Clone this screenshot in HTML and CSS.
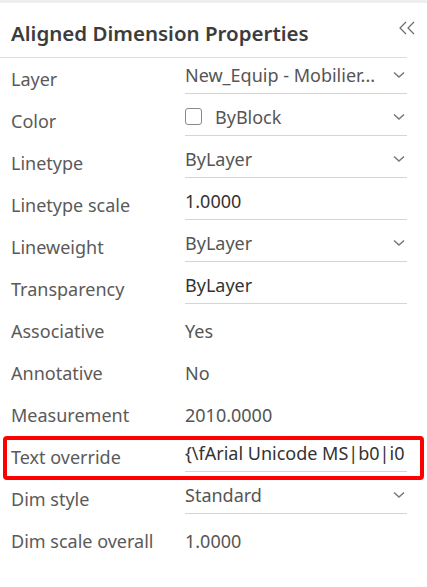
FILE: index.html
```html
<!DOCTYPE html>
<html lang="en">

<head>
  <meta charset="UTF-8">
  <meta name="viewport" content="width=device-width, initial-scale=1.0">
  <title>Aligned Dimension Properties</title>
  <link rel="stylesheet" href="styles.css">
</head>

<body>
  <div class="topbar"></div>
  <div class="panel">
    <div class="panel-header">
      <h1>Aligned Dimension Properties</h1>
      <button class="collapse-btn" title="Collapse">
        <svg width="18" height="14" viewBox="0 0 18 14">
          <path d="M8 1 L2 7 L8 13 M16 1 L10 7 L16 13" fill="none" stroke="#6b6b6b" stroke-width="1.2" />
        </svg>
      </button>
    </div>

    <div class="prop-row">
      <div class="prop-label">Layer</div>
      <div class="prop-value select">
        <span class="value-text">New_Equip - Mobilier...</span>
        <svg class="caret" width="12" height="8" viewBox="0 0 12 8"><path d="M1 1.5 L6 6 L11 1.5" fill="none" stroke="#777" stroke-width="1.5" /></svg>
      </div>
    </div>

    <div class="prop-row">
      <div class="prop-label">Color</div>
      <div class="prop-value select">
        <span class="swatch"></span>
        <span class="value-text">ByBlock</span>
        <svg class="caret" width="12" height="8" viewBox="0 0 12 8"><path d="M1 1.5 L6 6 L11 1.5" fill="none" stroke="#777" stroke-width="1.5" /></svg>
      </div>
    </div>

    <div class="prop-row">
      <div class="prop-label">Linetype</div>
      <div class="prop-value select">
        <span class="value-text">ByLayer</span>
        <svg class="caret" width="12" height="8" viewBox="0 0 12 8"><path d="M1 1.5 L6 6 L11 1.5" fill="none" stroke="#777" stroke-width="1.5" /></svg>
      </div>
    </div>

    <div class="prop-row">
      <div class="prop-label">Linetype scale</div>
      <div class="prop-value input">
        <span class="value-text">1.0000</span>
      </div>
    </div>

    <div class="prop-row">
      <div class="prop-label">Lineweight</div>
      <div class="prop-value select">
        <span class="value-text">ByLayer</span>
        <svg class="caret" width="12" height="8" viewBox="0 0 12 8"><path d="M1 1.5 L6 6 L11 1.5" fill="none" stroke="#777" stroke-width="1.5" /></svg>
      </div>
    </div>

    <div class="prop-row">
      <div class="prop-label">Transparency</div>
      <div class="prop-value input">
        <span class="value-text">ByLayer</span>
      </div>
    </div>

    <div class="prop-row">
      <div class="prop-label">Associative</div>
      <div class="prop-value static">Yes</div>
    </div>

    <div class="prop-row">
      <div class="prop-label">Annotative</div>
      <div class="prop-value static">No</div>
    </div>

    <div class="prop-row">
      <div class="prop-label">Measurement</div>
      <div class="prop-value static">2010.0000</div>
    </div>

    <div class="prop-row highlighted">
      <div class="prop-label">Text override</div>
      <div class="prop-value input">
        <span class="value-text">{\fArial Unicode MS|b0|i0</span>
      </div>
    </div>

    <div class="prop-row">
      <div class="prop-label">Dim style</div>
      <div class="prop-value select">
        <span class="value-text">Standard</span>
        <svg class="caret" width="12" height="8" viewBox="0 0 12 8"><path d="M1 1.5 L6 6 L11 1.5" fill="none" stroke="#777" stroke-width="1.5" /></svg>
      </div>
    </div>

    <div class="prop-row">
      <div class="prop-label">Dim scale overall</div>
      <div class="prop-value static">1.0000</div>
    </div>
  </div>
</body>

</html>
```

FILE: styles.css
```css
* {
  margin: 0;
  padding: 0;
  box-sizing: border-box;
}

body {
  font-family: 'Noto Sans', 'Lato', sans-serif;
  background: #ffffff;
  color: #555555;
  width: 427px;
}

.topbar {
  height: 3px;
  background: #eeeeee;
}

.panel {
  width: 407px;
}

.panel-header {
  height: 55px;
  display: flex;
  align-items: center;
  justify-content: space-between;
  padding-left: 11px;
  border-bottom: 1px solid #dddddd;
}

.panel-header h1 {
  font-size: 20.5px;
  font-weight: 600;
  color: #3c3c3c;
  margin-top: 6px;
}

.collapse-btn {
  background: none;
  border: none;
  margin-right: -9px;
  margin-top: -5px;
  display: flex;
}

.prop-row {
  position: relative;
  height: 42px;
  display: flex;
  align-items: center;
  padding-left: 11px;
  font-size: 18px;
}

.prop-label {
  width: 174px;
  flex-shrink: 0;
  color: #5a5a5a;
}

.prop-value {
  flex: 1;
  min-width: 0;
}

.prop-value.select,
.prop-value.input {
  display: flex;
  align-items: center;
  height: 31px;
  padding-bottom: 7px;
  border-bottom: 1px solid #d4d4d4;
  margin-top: -1px;
}

.prop-value.select .value-text {
  flex: 1;
  color: #555555;
  white-space: nowrap;
}

.prop-value.input .value-text {
  color: #333333;
  white-space: nowrap;
}

.caret {
  margin-right: 2px;
  flex-shrink: 0;
}

.swatch {
  width: 17px;
  height: 17px;
  border: 1px solid #8a8a8a;
  border-radius: 3px;
  margin-right: 13px;
  flex-shrink: 0;
}

.prop-value.static {
  color: #555555;
}

.highlighted::after {
  content: '';
  position: absolute;
  left: 3px;
  right: -17px;
  top: 0;
  bottom: -2px;
  border: 4px solid #ff0000;
  border-radius: 4px;
}
```
